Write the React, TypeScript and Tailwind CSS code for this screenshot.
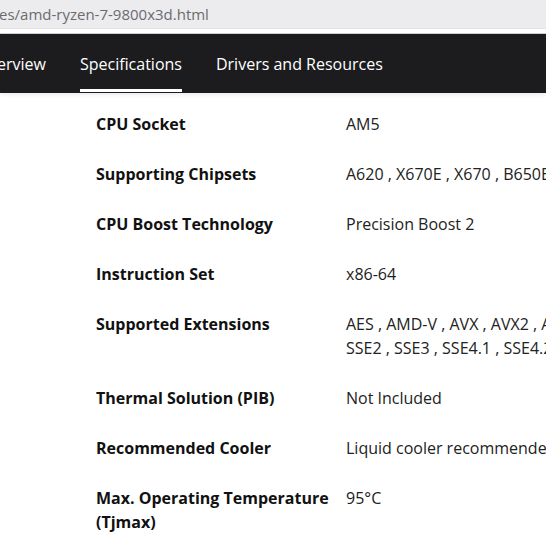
import React from 'react';

const specs: { label: string[]; value: string[] }[] = [
  { label: ['CPU Socket'], value: ['AM5'] },
  { label: ['Supporting Chipsets'], value: ['A620 , X670E , X670 , B650E , B650 , X870E , X870 , B840 , B850'] },
  { label: ['CPU Boost Technology'], value: ['Precision Boost 2'] },
  { label: ['Instruction Set'], value: ['x86-64'] },
  {
    label: ['Supported Extensions'],
    value: [
      'AES , AMD-V , AVX , AVX2 , AVX512 , FMA3 , MMX-plus , SHA , SSE ,',
      'SSE2 , SSE3 , SSE4.1 , SSE4.2 , SSE4A , SSSE3 , x86-64',
    ],
  },
  { label: ['Thermal Solution (PIB)'], value: ['Not Included'] },
  { label: ['Recommended Cooler'], value: ['Liquid cooler recommended for optimal performance'] },
  { label: ['Max. Operating Temperature', '(Tjmax)'], value: ['95°C'] },
];

export default function App() {
  return (
    <div
      className="w-[546px] h-[554px] overflow-hidden bg-white"
      style={{ fontFamily: '"Open Sans", "Noto Sans", sans-serif' }}
    >
      {/* address bar strip */}
      <div className="h-[29px] bg-[#ececee] border-b border-[#e2e2e4] flex items-center">
        <span className="text-[15px] text-[#6b6b6f] whitespace-nowrap -ml-[1px] leading-none">
          es/amd-ryzen-7-9800x3d.html
        </span>
      </div>
      <div className="h-[5px] bg-white border-b border-[#d0d0d0]" />

      {/* nav */}
      <nav className="h-[59px] bg-[#1c1c1e] flex items-stretch text-white text-[16px] whitespace-nowrap shadow-[0_2px_4px_rgba(0,0,0,0.08)]">
        <div className="flex items-center -ml-[3px]">erview</div>
        <div className="flex flex-col justify-center ml-[34px] relative">
          <span>Specifications</span>
          <span className="absolute left-0 right-0 bottom-[1px] h-[3px] bg-white" />
        </div>
        <div className="flex items-center ml-[34px]">Drivers and Resources</div>
      </nav>

      {/* specs table */}
      <div className="pt-[6px] pl-[96px] text-[16px] leading-[24px]">
        {specs.map((row) => (
          <div key={row.label[0]} className="flex py-[13px]">
            <div className="w-[250px] shrink-0 font-bold text-[#111]">
              {row.label.map((l) => (
                <div key={l}>{l}</div>
              ))}
            </div>
            <div className="text-[#222] whitespace-nowrap">
              {row.value.map((v) => (
                <div key={v}>{v}</div>
              ))}
            </div>
          </div>
        ))}
      </div>
    </div>
  );
}
